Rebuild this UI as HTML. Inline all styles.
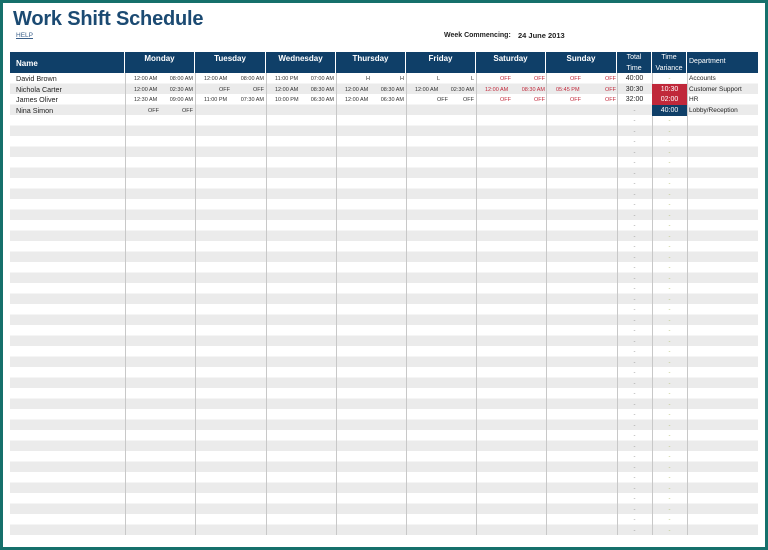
<!DOCTYPE html>
<html><head><meta charset="utf-8"><style>
*{margin:0;padding:0;box-sizing:border-box}
body{width:768px;height:550px;background:#16706b;position:relative;overflow:hidden;font-family:"Liberation Sans",sans-serif}
#pg{position:absolute;left:3px;top:3px;width:762px;height:544px;background:#fff}
.a{position:absolute}
h1{position:absolute;left:13px;top:8px;font-size:20px;color:#1b4a72;font-weight:bold;letter-spacing:-0.2px}
.hd{position:absolute;top:52px;height:21px;background:#0f3f68;color:#fff;font-size:8px;font-weight:bold;text-align:center;border-right:1px solid #fff}
.vl{position:absolute;top:73px;height:462px;width:1px;background:#c8c8c8}
.r{color:#c0283a}
.dash{position:absolute;top:74px;width:35px;text-align:center;font-size:6px;line-height:10.5px;color:#999}
</style></head><body>
<div id="pg"></div>
<h1>Work Shift Schedule</h1>
<div class="a" style="left:16px;top:32px;font-size:6.5px;color:#3a5f8a;text-decoration:underline">HELP</div>
<div class="a" style="left:444px;top:32px;font-size:7px;font-weight:bold;color:#222">Week Commencing:</div>
<div class="a" style="left:518px;top:31px;font-size:7.5px;font-weight:bold;color:#222">24 June 2013</div>
<div class="a" style="left:10px;top:73px;width:748px;height:462px;background:repeating-linear-gradient(#fff 0 10.5px,#ebebeb 10.5px 21px)"></div>
<div class="hd" style="left:10px;width:115px;text-align:left;padding:7px 0 0 6px">Name</div>
<div class="hd" style="left:125px;width:70px;padding-top:2px">Monday</div>
<div class="hd" style="left:195px;width:71px;padding-top:2px">Tuesday</div>
<div class="hd" style="left:266px;width:70px;padding-top:2px">Wednesday</div>
<div class="hd" style="left:336px;width:70px;padding-top:2px">Thursday</div>
<div class="hd" style="left:406px;width:70px;padding-top:2px">Friday</div>
<div class="hd" style="left:476px;width:70px;padding-top:2px">Saturday</div>
<div class="hd" style="left:546px;width:71px;padding-top:2px">Sunday</div>
<div class="hd" style="left:617px;width:35px;font-weight:normal;font-size:7px;line-height:11px;padding-top:0">Total<br>Time</div>
<div class="hd" style="left:652px;width:35px;font-weight:normal;font-size:7px;line-height:11px;padding-top:0">Time<br>Variance</div>
<div class="hd" style="left:687px;width:71px;font-weight:normal;font-size:7px;text-align:left;padding:6px 0 0 2px;border:0">Department</div>
<div class="vl" style="left:125px"></div><div class="vl" style="left:195px"></div><div class="vl" style="left:266px"></div><div class="vl" style="left:336px"></div><div class="vl" style="left:406px"></div><div class="vl" style="left:476px"></div><div class="vl" style="left:546px"></div><div class="vl" style="left:617px"></div><div class="vl" style="left:652px"></div><div class="vl" style="left:687px"></div>
<div class="a" style="left:652px;top:84px;width:35px;height:21px;background:#c0283a"></div>
<div class="a" style="left:652px;top:105px;width:35px;height:10.5px;background:#0f3f68"></div>
<div class="dash" style="left:617px">&nbsp;<br>&nbsp;<br>&nbsp;<br>-<br>-<br>-<br>-<br>-<br>-<br>-<br>-<br>-<br>-<br>-<br>-<br>-<br>-<br>-<br>-<br>-<br>-<br>-<br>-<br>-<br>-<br>-<br>-<br>-<br>-<br>-<br>-<br>-<br>-<br>-<br>-<br>-<br>-<br>-<br>-<br>-<br>-<br>-<br>-<br>-</div>
<div class="dash" style="left:652px;color:#b8c47a">-<br>&nbsp;<br>&nbsp;<br>&nbsp;<br>-<br>-<br>-<br>-<br>-<br>-<br>-<br>-<br>-<br>-<br>-<br>-<br>-<br>-<br>-<br>-<br>-<br>-<br>-<br>-<br>-<br>-<br>-<br>-<br>-<br>-<br>-<br>-<br>-<br>-<br>-<br>-<br>-<br>-<br>-<br>-<br>-<br>-<br>-<br>-</div>
<div class="a" style="left:617px;top:74px;width:35px;font-size:7px;line-height:10.5px;text-align:center;color:#222">40:00<br>30:30<br>32:00</div>
<div class="a" style="left:652px;top:84.5px;width:35px;font-size:7px;line-height:10.5px;text-align:center;color:#fff">10:30<br>02:00<br>40:00</div>
<div class="a" style="left:689px;top:74px;font-size:6.5px;line-height:10.5px;color:#222">Accounts<br>Customer Support<br>HR<br>Lobby/Reception</div>
<div class="a" style="left:16px;top:74px;font-size:7.2px;line-height:10.5px;color:#222">David Brown<br>Nichola Carter<br>James Oliver<br>Nina Simon</div>
<div class="a" style="top:74px;left:0;width:768px;font-size:5.5px;line-height:10.5px;color:#333">
<div class="a" style="left:134px;top:0">12:00 AM<br>12:00 AM<br>12:30 AM</div>
<div class="a" style="left:126px;top:0;width:67px;text-align:right">08:00 AM<br>02:30 AM<br>09:00 AM<br>OFF</div>
<div class="a" style="left:148px;top:31.5px">OFF</div>
<div class="a" style="left:204px;top:0">12:00 AM<br>&nbsp;<br>11:00 PM</div>
<div class="a" style="left:219px;top:10.5px">OFF</div>
<div class="a" style="left:196px;top:0;width:68px;text-align:right">08:00 AM<br>OFF<br>07:30 AM</div>
<div class="a" style="left:275px;top:0">11:00 PM<br>12:00 AM<br>10:00 PM</div>
<div class="a" style="left:266px;top:0;width:68px;text-align:right">07:00 AM<br>08:30 AM<br>06:30 AM</div>
<div class="a" style="left:345px;top:0">&nbsp;<br>12:00 AM<br>12:00 AM</div>
<div class="a" style="left:366px;top:0">H</div>
<div class="a" style="left:336px;top:0;width:68px;text-align:right">H<br>08:30 AM<br>06:30 AM</div>
<div class="a" style="left:415px;top:0">&nbsp;<br>12:00 AM</div>
<div class="a" style="left:437px;top:0">L<br>&nbsp;<br>OFF</div>
<div class="a" style="left:406px;top:0;width:68px;text-align:right">L<br>02:30 AM<br>OFF</div>
<div class="a r" style="left:485px;top:10.5px">12:00 AM</div>
<div class="a r" style="left:500px;top:0">OFF<br>&nbsp;<br>OFF</div>
<div class="a r" style="left:476px;top:0;width:69px;text-align:right">OFF<br>08:30 AM<br>OFF</div>
<div class="a r" style="left:556px;top:10.5px">05:45 PM</div>
<div class="a r" style="left:570px;top:0">OFF<br>&nbsp;<br>OFF</div>
<div class="a r" style="left:546px;top:0;width:70px;text-align:right">OFF<br>OFF<br>OFF</div>
</div>
</body></html>
